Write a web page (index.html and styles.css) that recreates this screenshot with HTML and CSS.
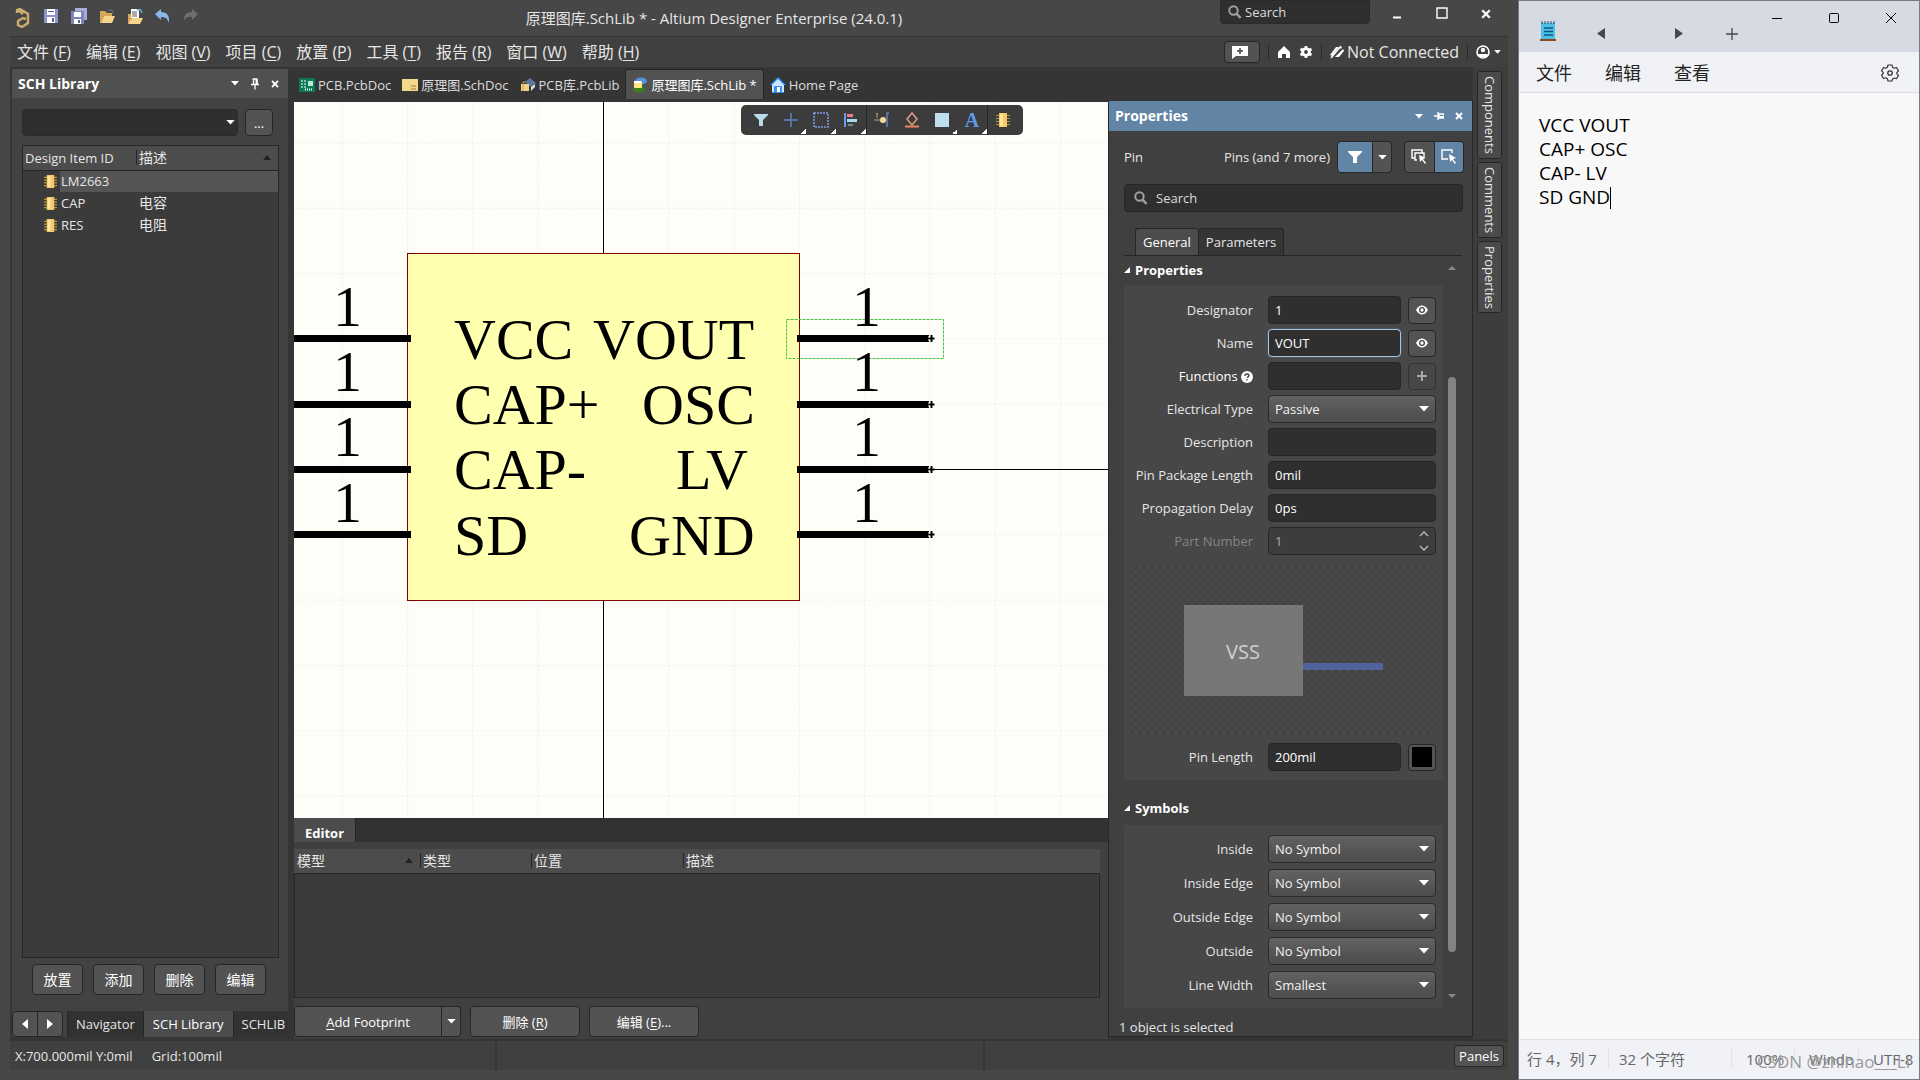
FILE: index.html
```html
<!DOCTYPE html>
<html lang="zh-CN">
<head>
<meta charset="utf-8">
<title>原理图库.SchLib * - Altium Designer Enterprise (24.0.1)</title>
<link rel="stylesheet" href="styles.css">
</head>
<body>
<svg class="defs" width="0" height="0" aria-hidden="true">
  <symbol id="down" viewBox="0 0 10 6"><path d="M0 0h10L5 5.500z" fill="currentColor"/></symbol>
  <symbol id="chip" viewBox="0 0 14 16"><path d="M0 3.500h14M0 6.500h14M0 9.500h14M0 12.500h14" stroke="#b8933f" stroke-width="1.200"/><rect x="3" y="1" width="8" height="14" fill="#f6c968"/><rect x="4" y="2" width="3" height="12" fill="#ffe3a0"/></symbol>
  <symbol id="search" viewBox="0 0 14 14"><circle cx="5.500" cy="5.500" r="4.200" fill="none" stroke="#a0a0a0" stroke-width="2"/><path d="M8.500 8.500l4 4.500" stroke="#a0a0a0" stroke-width="2.600"/></symbol>
  <symbol id="eye" viewBox="0 0 14 12"><path d="M1 6C3 2.500 5 1.500 7 1.500S11 2.500 13 6C11 9.500 9 10.500 7 10.500S3 9.500 1 6z" fill="#fff"/><circle cx="7" cy="6" r="3" fill="#444"/><circle cx="7" cy="6" r="1.700" fill="#fff"/></symbol>
  <symbol id="pin" viewBox="0 0 10 12"><path d="M2.500 1h5M3.500 1v5M7 1v5M1 6.500h8M5 7v4.500" stroke="#fff" stroke-width="1.300" fill="none"/><path d="M5.500 1h2v5h-2z" fill="#fff"/></symbol>
  <symbol id="x" viewBox="0 0 8 8"><path d="M1 1l6 6M7 1L1 7" stroke="currentColor" stroke-width="1.800"/></symbol>
  <symbol id="funnel" viewBox="0 0 14 14"><path d="M0 1h14v1L9 7v6H5V7L0 2z" fill="currentColor"/></symbol>
</svg>
<div class="desktop">
<main class="altium">
  <header class="titlebar">
    <div class="quick">
      <svg width="16" height="20" viewBox="0 0 16 20"><path d="M2 5V2l3-1 8 5v9l-6 4-4-2v-4l5-3 3 1M3 2l5 4" fill="none" stroke="#c9ad6d" stroke-width="2.400"/></svg>
      <svg width="16" height="16" viewBox="0 0 16 16"><path d="M1 1h14v14H1z" fill="#8f93cd"/><path d="M4 1h8v6H4zM4 9h8v6H4z" fill="#fff"/><path d="M9 10h2v4H9zM5 3h6v1H5z" fill="#5c5f90"/></svg>
      <svg width="16" height="16" viewBox="0 0 16 16"><path d="M4 0h12v12H4z" fill="#a9acd9"/><path d="M0 3h13v13H0z" fill="#8084bd"/><path d="M3 4h7v5H3zM3 11h7v5H3z" fill="#fff"/><path d="M7 12h2v3H7z" fill="#5c5f90"/></svg>
      <svg width="16" height="16" viewBox="0 0 16 16"><path d="M1 3h5l2 2h5v3H5l-3 7H1z" fill="#d6a954"/><path d="M5 8h11l-3 7H2z" fill="#f7d48c"/><path d="M9 3q4-3 5 2" stroke="#4c6c88" stroke-width="1.500" fill="none"/></svg>
      <svg width="16" height="16" viewBox="0 0 16 16"><path d="M1 6h3v9H1z" fill="#d6a954"/><path d="M4 1h8v9H4z" fill="#fff"/><path d="M5 4h5M5 6h5M5 8h5" stroke="#555"/><path d="M5 10h11l-3 6H1z" fill="#f7d48c"/><path d="M10 2q4-2 5 3" stroke="#6ba2cf" stroke-width="1.500" fill="none"/></svg>
      <svg width="16" height="16" viewBox="0 0 16 16"><path d="M0 6l6-5v3q9 0 8 11-2-7-8-6v3z" fill="#8ab6ea"/></svg>
      <svg width="16" height="16" viewBox="0 0 16 16"><path d="M15 6l-6-5v3q-9 0-8 9 2-5 8-4v3z" fill="#6f6f6f"/></svg>
    </div>
    <h1>原理图库.SchLib * - Altium Designer Enterprise (24.0.1)</h1>
    <div class="title-right">
      <label class="title-search"><svg width="14" height="14"><use href="#search"/></svg><input type="text" placeholder="Search" aria-label="Search"></label>
      <button aria-label="Minimize"><svg width="12" height="12"><path d="M2 10.500h8" stroke="#fff" stroke-width="2"/></svg></button>
      <button aria-label="Maximize"><svg width="12" height="12"><path d="M1 1h10v10H1z" fill="none" stroke="#fff" stroke-width="1.400"/></svg></button>
      <button aria-label="Close"><svg width="10" height="10" class="w"><use href="#x"/></svg></button>
    </div>
  </header>
  <nav class="menubar">
    <div class="menus">
      <button>文件 (<u>F</u>)</button><button>编辑 (<u>E</u>)</button><button>视图 (<u>V</u>)</button><button>项目 (<u>C</u>)</button><button>放置 (<u>P</u>)</button><button>工具 (<u>T</u>)</button><button>报告 (<u>R</u>)</button><button>窗口 (<u>W</u>)</button><button>帮助 (<u>H</u>)</button>
    </div>
    <div class="account">
      <button class="btn note" aria-label="Comment"><svg width="18" height="14" viewBox="0 0 18 14"><path d="M1 1h16v10H5l-4 3z" fill="#fff"/><path d="M9 3v6M6 6h6" stroke="#444" stroke-width="1.500"/></svg></button>
      <i></i>
      <svg width="14" height="14" viewBox="0 0 14 14"><path d="M7 1l6 6v6H9V9H5v4H1V7z" fill="#fff"/></svg>
      <svg width="14" height="14" viewBox="0 0 14 14"><path d="M7 1v12M1.500 4l11 6M12.500 4l-11 6" stroke="#fff" stroke-width="2.600"/><circle cx="7" cy="7" r="3.600" fill="none" stroke="#fff" stroke-width="2.400"/><circle cx="7" cy="7" r="1.900" fill="#404040"/></svg>
      <i></i>
      <svg width="14" height="14" viewBox="0 0 14 14"><path d="M0 10l6-8h3L2 11zM5 12l8-8 1 2-5 6zM9 2h3l-1 2z" fill="#fff"/><path d="M1 13L11 1" stroke="#fff" stroke-width="1.400"/></svg>
      <span class="conn">Not Connected</span>
      <i></i>
      <svg width="14" height="14" viewBox="0 0 14 14"><circle cx="7" cy="7" r="6" fill="none" stroke="#fff" stroke-width="1.600"/><circle cx="7" cy="5" r="2.200" fill="#fff"/><path d="M2 9h10l-2 3H4z" fill="#fff"/></svg>
      <svg width="7" height="4" class="w"><use href="#down"/></svg>
    </div>
  </nav>

  <div class="workspace">
    <aside class="library">
      <header class="panel-head"><h2>SCH Library</h2><span class="tools"><svg width="8" height="5"><use href="#down"/></svg><svg width="10" height="12"><use href="#pin"/></svg><svg width="8" height="8"><use href="#x"/></svg></span></header>
      <div class="lib-search">
        <div class="pick dark"><select aria-label="Filter"><option></option></select><svg width="9" height="5"><use href="#down"/></svg></div>
        <button class="btn">...</button>
      </div>
      <div class="lib-list">
        <table>
          <thead><tr><th>Design Item ID</th><th class="sep"><span>描述<svg width="8" height="5" viewBox="0 0 8 5"><path d="M0 5h8L4 0z" fill="#222"/></svg></span></th></tr></thead>
          <tbody>
            <tr class="sel"><td><svg width="13" height="15"><use href="#chip"/></svg>LM2663</td><td></td></tr>
            <tr><td><svg width="13" height="15"><use href="#chip"/></svg>CAP</td><td>电容</td></tr>
            <tr><td><svg width="13" height="15"><use href="#chip"/></svg>RES</td><td>电阻</td></tr>
          </tbody>
        </table>
      </div>
      <div class="lib-actions"><button class="btn">放置</button><button class="btn">添加</button><button class="btn">删除</button><button class="btn">编辑</button></div>
      <div class="lib-tabs">
        <div class="stepper"><button class="btn" aria-label="Previous"><svg width="6" height="10"><path d="M6 0v10L0 5z" fill="#fff"/></svg></button><button class="btn" aria-label="Next"><svg width="6" height="10"><path d="M0 0v10l6-5z" fill="#fff"/></svg></button></div>
        <button class="tab">Navigator</button><button class="tab on">SCH Library</button><button class="tab">SCHLIB</button>
      </div>
    </aside>

    <section class="center">
      <div class="doc-tabs">
        <button><svg width="16" height="14" viewBox="0 0 16 14"><path d="M0 0h16v14H0z" fill="#087a55"/><path d="M2 3h2M2 6h2M2 9h2M5 3h2M5 6h2M5 9h2" stroke="#fff"/><path d="M9 3h5v5H9z" fill="#bfe7d8"/><path d="M6 11.500h8" stroke="#fff" stroke-dasharray="1 1" stroke-width="2"/></svg>PCB.PcbDoc</button>
        <button><svg width="16" height="14" viewBox="0 0 16 14"><path d="M0 1h16v12H0z" fill="#f5d98a"/><path d="M9 8h5M9 11h5" stroke="#9c7c34"/></svg>原理图.SchDoc</button>
        <button><svg width="16" height="14" viewBox="0 0 16 14"><path d="M5 4l5-4 6 5-5 4z" fill="#57789c"/><path d="M1 6h8v7H1z" fill="#f0d488"/><path d="M3 13V4h3" stroke="#caa04c" fill="none"/><path d="M11 9l4-3v3l-4 4z" fill="#ddd"/></svg>PCB库.PcbLib</button>
        <button class="on"><svg width="16" height="16" viewBox="0 0 16 16"><ellipse cx="7" cy="12" rx="6" ry="3.500" fill="#3d7d1c"/><ellipse cx="9" cy="4" rx="6" ry="3.500" fill="#5791dc"/><rect x="2" y="4" width="8" height="7" rx="1" fill="#ffe784"/><path d="M2 4h7v2H2z" fill="#fff"/></svg>原理图库.SchLib *</button>
        <button><svg width="16" height="16" viewBox="0 0 16 16"><path d="M8 0l8 8h-2v8H2V8H0z" fill="#2f8df0"/><path d="M8 2l6 6v7H2V8z" fill="#cfe6ff"/><path d="M4 9h8v6H4z" fill="#3d92f2"/><path d="M7 10h3v5H7z" fill="#fff"/></svg>Home Page</button>
      </div>
      <div class="canvas">
        <svg class="sheet" width="100%" height="100%">
          <defs><pattern id="grid" x="309" y="367" width="65.300" height="65.300" patternUnits="userSpaceOnUse"><path d="M.5 0v65.300M0 .5h65.300" stroke="#efeeeb" stroke-dasharray="2 2"/></pattern></defs>
          <rect width="100%" height="100%" fill="url(#grid)"/>
          <path d="M309.500 0v716M638 367.500h800" stroke="#000" shape-rendering="crispEdges"/>
          <rect x="113.500" y="151.500" width="392" height="347" fill="#ffffb0" stroke="#800000"/>
          <g stroke="#000" stroke-width="7"><path d="M0 236.500h117M0 302.500h117M0 367.500h117M0 432.500h117M503 236.500h132M503 302.500h132M503 367.500h132M503 432.500h132"/></g>
          <path d="M632.500 236.500h8M637.500 233v7M632.500 302.500h8M637.500 299v7M632.500 367.500h8M637.500 364v7M632.500 432.500h8M637.500 429v7" stroke="#000" stroke-width="2"/>
          <path d="M634 235h2M634 238h2M634 301h2M634 304h2M634 366h2M634 369h2M634 431h2M634 434h2" stroke="#fff"/>
          <rect x="492.500" y="217.500" width="157" height="39" fill="none" stroke="#46c646" stroke-dasharray="3 1"/>
          <g class="pins">
            <text x="160" y="257">VCC</text><text x="160" y="322">CAP+</text><text x="160" y="387">CAP-</text><text x="160" y="453">SD</text>
            <text x="299" y="257">VOUT</text><text x="348" y="322">OSC</text><text x="382" y="387" class="kern">LV</text><text x="335" y="453">GND</text>
            <text x="39" y="224">1</text><text x="39" y="289">1</text><text x="39" y="354">1</text><text x="39" y="420">1</text>
            <text x="558" y="224">1</text><text x="558" y="289">1</text><text x="558" y="354">1</text><text x="558" y="420">1</text>
          </g>
        </svg>
        <div class="floatbar">
          <button aria-label="Filter"><svg width="14" height="14" color="#b9dcea"><use href="#funnel"/></svg></button>
          <button class="more" aria-label="Move"><svg width="14" height="14"><path d="M7 0v14M0 7h14" stroke="#5f82c4" stroke-width="1.500"/></svg></button>
          <button class="more" aria-label="Select"><svg width="16" height="16"><path d="M1 1h14v14H1z" fill="none" stroke="#7f9be8" stroke-width="1.500" stroke-dasharray="2 1"/></svg></button>
          <button class="more" aria-label="Align"><svg width="14" height="14"><path d="M1 0v14" stroke="#5f9be8" stroke-width="2"/><path d="M3 1h6v3H3z" fill="#ef7b86"/><path d="M3 6h10v3H3z" fill="#a9d8ea"/><path d="M4 12h5" stroke="#a9d8ea"/></svg></button>
          <button class="bar" aria-label="Place pin"><svg width="16" height="16"><path d="M0 8h9M3 1v5M2 2h2" stroke="#b7a56c"/><circle cx="9" cy="8" r="3" fill="#f3dc9b"/><path d="M15 1h-2v14" stroke="#5f82c4" fill="none" stroke-width="1.500"/></svg></button>
          <button aria-label="Port"><svg width="14" height="16"><path d="M7 1l5 6-5 6-5-6z" fill="none" stroke="#e09a86" stroke-width="1.500"/><path d="M0 14.500h14" stroke="#ee8465" stroke-width="2"/></svg></button>
          <button class="more" aria-label="Rectangle"><svg width="14" height="14"><path d="M0 0h14v14H0z" fill="#bde0ec"/></svg></button>
          <button class="more letter">A</button>
          <button class="bar" aria-label="Component"><svg width="14" height="16"><use href="#chip"/></svg></button>
        </div>
      </div>
      <div class="editor">
        <div class="editor-tabs"><button>Editor</button></div>
        <div class="models"><table><thead><tr><th><span>模型<svg width="8" height="5" viewBox="0 0 8 5"><path d="M0 5h8L4 0z" fill="#222"/></svg></span></th><th class="sep">类型</th><th class="sep">位置</th><th class="sep">描述</th></tr></thead></table></div>
        <div class="model-actions">
          <div class="split"><button class="btn"><u>A</u>dd Footprint</button><button class="btn" aria-label="More"><svg width="9" height="5"><use href="#down"/></svg></button></div>
          <button class="btn">删除 (<u>R</u>)</button><button class="btn">编辑 (<u>E</u>)...</button>
        </div>
      </div>
    </section>

    <aside class="props">
      <header class="panel-head blue"><h2>Properties</h2><span class="tools"><svg width="8" height="5"><use href="#down"/></svg><svg width="10" height="8" viewBox="0 0 10 8"><path d="M0 4h4M4 0v8M5 2h5v4H5z" stroke="#fff" stroke-width="1.300" fill="none"/><path d="M5 4h5v2H5z" fill="#fff"/></svg><svg width="8" height="8"><use href="#x"/></svg></span></header>
      <div class="scope">
        <span>Pin</span><span class="what">Pins (and 7 more)</span>
        <div class="split"><button class="btn lit" aria-label="Filter"><svg width="14" height="14"><use href="#funnel"/></svg></button><button class="btn" aria-label="Filter options"><svg width="9" height="5"><use href="#down"/></svg></button></div>
        <div class="split even"><button class="btn" aria-label="All objects"><svg width="16" height="16"><path d="M4 9H1V1h10v3M6 11H4V4h9v4" fill="none" stroke="#fff" stroke-width="1.400"/><path d="M8 6l7 3-3 1 3 4-1 1-3-4-2 2z" fill="#fff"/></svg></button><button class="btn lit" aria-label="Selected"><svg width="16" height="16"><path d="M7 10H1V1h10v3" fill="none" stroke="#fff" stroke-width="1.400"/><path d="M8 5l7 4-3 1 3 4-1 1-3-4-2 2z" fill="#fff"/></svg></button></div>
      </div>
      <label class="find"><svg width="14" height="14"><use href="#search"/></svg><input type="text" placeholder="Search" aria-label="Search properties"></label>
      <div class="ptabs"><button class="on">General</button><button>Parameters</button></div>
      <div class="scroll">
        <div class="content">
          <h3><svg width="6" height="6"><path d="M6 0v6H0z" fill="#fff"/></svg>Properties</h3>
          <div class="box">
            <div class="row"><label for="f1">Designator</label><input id="f1" value="1"><button class="btn sq" aria-label="Show designator"><svg width="14" height="12"><use href="#eye"/></svg></button></div>
            <div class="row"><label for="f2">Name</label><input id="f2" class="focus" value="VOUT"><button class="btn sq" aria-label="Show name"><svg width="14" height="12"><use href="#eye"/></svg></button></div>
            <div class="row"><label for="f3" class="bright">Functions <svg width="12" height="12"><circle cx="6" cy="6" r="6" fill="#fff"/><path d="M4 5q0-2 2-2t2 1.500q0 1-2 2.200M6 8.200v1.400" stroke="#444" stroke-width="1.400" fill="none"/></svg></label><input id="f3"><button class="btn sq off" aria-label="Add function"><svg width="10" height="10"><path d="M5 0v10M0 5h10" stroke="#aaa" stroke-width="2"/></svg></button></div>
            <div class="row wide"><label for="f4">Electrical Type</label><div class="pick"><select id="f4"><option>Passive</option></select><svg width="10" height="6"><use href="#down"/></svg></div></div>
            <div class="row wide"><label for="f5">Description</label><input id="f5"></div>
            <div class="row wide"><label for="f6">Pin Package Length</label><input id="f6" value="0mil"></div>
            <div class="row wide"><label for="f7">Propagation Delay</label><input id="f7" value="0ps"></div>
            <div class="row wide dim"><label for="f8">Part Number</label><div class="pick"><input id="f8" type="number" value="1" disabled><svg width="10" height="20"><path d="M1 5l4-4 4 4M1 15l4 4 4-4" fill="none" stroke="#bbb" stroke-width="1.400"/></svg></div></div>
            <div class="preview"><div class="part">VSS</div><div class="lead"></div></div>
            <div class="row"><label for="f9">Pin Length</label><input id="f9" value="200mil"><button class="btn sq" aria-label="Pin color"><span class="swatch"></span></button></div>
          </div>
          <h3><svg width="6" height="6"><path d="M6 0v6H0z" fill="#fff"/></svg>Symbols</h3>
          <div class="box sym">
            <div class="row wide"><label for="s1">Inside</label><div class="pick"><select id="s1"><option>No Symbol</option></select><svg width="10" height="6"><use href="#down"/></svg></div></div>
            <div class="row wide"><label for="s2">Inside Edge</label><div class="pick"><select id="s2"><option>No Symbol</option></select><svg width="10" height="6"><use href="#down"/></svg></div></div>
            <div class="row wide"><label for="s3">Outside Edge</label><div class="pick"><select id="s3"><option>No Symbol</option></select><svg width="10" height="6"><use href="#down"/></svg></div></div>
            <div class="row wide"><label for="s4">Outside</label><div class="pick"><select id="s4"><option>No Symbol</option></select><svg width="10" height="6"><use href="#down"/></svg></div></div>
            <div class="row wide"><label for="s5">Line Width</label><div class="pick"><select id="s5"><option>Smallest</option></select><svg width="10" height="6"><use href="#down"/></svg></div></div>
          </div>
        </div>
        <div class="rail"><svg width="8" height="4"><path d="M0 4h8L4 0z" fill="#888"/></svg><div class="thumb"></div><svg width="8" height="4"><path d="M0 0h8L4 4z" fill="#888"/></svg></div>
      </div>
      <footer>1 object is selected</footer>
    </aside>

    <nav class="side"><button>Components</button><button>Comments</button><button>Properties</button></nav>
  </div>

  <footer class="status"><span>X:700.000mil Y:0mil</span><span class="gridsize">Grid:100mil</span><span class="cell"></span><button class="btn">Panels</button></footer>
</main>

<section class="notepad">
  <header>
    <svg width="16" height="20" viewBox="0 0 16 20"><path d="M1 2h14v16H1z" fill="#4cc0e4"/><path d="M0 18h16v2H0z" fill="#8a4a20"/><path d="M2 0v3M5 0v3M8 0v3M11 0v3M14 0v3" stroke="#246"/><path d="M4 7h9M4 10.500h9M4 14h9" stroke="#0c5680" stroke-width="1.500"/></svg>
    <button aria-label="Previous tab"><svg width="9" height="11"><path d="M8 0v11L0 5.500z" fill="#444750"/></svg></button>
    <button aria-label="Next tab"><svg width="9" height="11"><path d="M0 0v11l8-5.500z" fill="#444750"/></svg></button>
    <button aria-label="New tab"><svg width="12" height="12"><path d="M6 0v12M0 6h12" stroke="#444750" stroke-width="1.300"/></svg></button>
    <div class="winctl">
      <button aria-label="Minimize"><svg width="10" height="10"><path d="M0 5.500h10" stroke="#000"/></svg></button>
      <button aria-label="Maximize"><svg width="10" height="10"><rect x=".5" y=".5" width="9" height="9" rx="1" fill="none" stroke="#000"/></svg></button>
      <button aria-label="Close"><svg width="10" height="10"><path d="M0 0l10 10M10 0L0 10" stroke="#000"/></svg></button>
    </div>
  </header>
  <nav><button>文件</button><button>编辑</button><button>查看</button><button class="gear" aria-label="Settings"><svg width="18" height="18" viewBox="0 0 18 18"><path d="M7 1h4l.6 2.300 1.600.9 2.300-.7 2 3.400-1.700 1.700v1l1.700 1.700-2 3.400-2.300-.7-1.600.9L11 17H7l-.6-2.300-1.600-.9-2.300.7-2-3.400 1.700-1.700v-1L.5 6.900l2-3.400 2.300.7 1.600-.9z" fill="none" stroke="#333" stroke-width="1.200" stroke-linejoin="round"/><circle cx="9" cy="9" r="2.200" fill="none" stroke="#333" stroke-width="1.300"/></svg></button></nav>
  <article contenteditable="true" spellcheck="false">VCC VOUT<br>CAP+ OSC<br>CAP- LV<br>SD GND<span class="caret"></span></article>
  <footer><span>行 4，列 7</span><span>32 个字符</span><span>100%</span><span>Windo</span><span>UTF-8</span><em>CSDN @zhihao___Li</em></footer>
</section>
</div>
</body>
</html>
```
FILE: styles.css
```css
* { box-sizing: border-box; }
body { margin: 0; font: 13px/18px "Open Sans", "Noto Sans CJK SC", sans-serif; color: #e6e6e6; background: #474747; }
button, input, select { font: inherit; color: inherit; margin: 0; padding: 0; border: 0; background: none; min-width: 0; }
button { white-space: nowrap; }
h1, h2, h3 { margin: 0; font-size: 14px; }
svg { flex: none; }
table { width: 100%; border-collapse: collapse; table-layout: fixed; }
th, td { padding: 0; text-align: left; font-weight: 400; }
.defs { position: absolute; }
.w { color: #fff; }
.desktop { display: grid; grid-template-columns: minmax(0, 1fr) 402px; height: 100vh; min-height: 1080px; }
.altium { display: flex; flex-direction: column; min-width: 0; padding: 0 9px 10px 10px; background: #474747; border-right: 1px solid #38434c; }

.btn { display: flex; align-items: center; justify-content: center; background: #535353; border: 1px solid #262626; border-radius: 4px; color: #fff; }
.btn u { text-underline-offset: 2px; }
.split { display: flex; }
.split .btn:first-child { flex: 1; border-radius: 4px 0 0 4px; }
.split .btn:last-child { width: 19px; border-left: 0; border-radius: 0 4px 4px 0; }
.btn.lit { background: #6285a5; }

.titlebar { display: grid; grid-template-columns: 1fr auto 1fr; align-items: center; height: 36px; flex: none; }
.quick { display: flex; gap: 12px; padding-left: 5px; }
.titlebar h1 { font-size: 15px; font-weight: 400; white-space: nowrap; padding-right: 90px; }
.title-right { display: flex; align-items: center; justify-content: flex-end; gap: 33px; align-self: start; height: 28px; padding-right: 17px; }
.title-right .title-search { margin-right: -12px; }
.title-search { display: flex; align-items: center; gap: 3px; width: 150px; height: 24px; padding-left: 7px; align-self: start; background: #2f2f2f; border: 1px solid #2a2a2a; border-radius: 0 0 4px 4px; }
input::placeholder { color: #ddd; opacity: 1; }
.title-search input { width: 110px; }

.menubar { display: flex; justify-content: space-between; align-items: center; height: 31px; flex: none; background: #404040; border-top: 1px solid #353535; }
.menus { display: flex; gap: 15px; padding-left: 7px; font-size: 16px; }
.menus u { text-underline-offset: 2px; }
.account { display: flex; align-items: center; gap: 8px; padding-right: 7px; }
.account i { width: 1px; height: 16px; background: #2a2a2a; }
.account .note { width: 36px; height: 22px; }
.account .conn { font-size: 16px; margin-left: -5px; }
.account svg:last-child { margin-left: -4px; }

.workspace { flex: 1; min-height: 0; display: grid; grid-template-columns: 280px minmax(0, 1fr) 365px 35px; background: #353535; border-left: 1px solid #353535; }
.panel-head { display: flex; align-items: center; justify-content: space-between; height: 29px; flex: none; padding: 0 9px 0 6px; background: #505050; color: #fff; }
.panel-head h2 { font-size: 14px; }
.tools { display: flex; align-items: center; gap: 11px; }
.panel-head.blue { height: 30px; background: #6285a5; }

.library { display: flex; flex-direction: column; min-width: 0; margin: 2px 3px 2px 1px; background: #424242; }
.lib-search { display: flex; gap: 7px; padding: 11px 15px 9px 10px; }
.lib-search .btn { width: 28px; height: 27px; }
.pick { display: grid; align-items: center; flex: 1; min-width: 0; }
.pick > * { grid-area: 1 / 1; }
.pick > svg { justify-self: end; margin-right: 7px; color: #fff; pointer-events: none; }
.pick select { appearance: none; width: 100%; height: 28px; padding-left: 6px; border: 1px solid #2a2a2a; border-radius: 4px; background: linear-gradient(#626262, #4c4c4c); color: #f2f2f2; }
.pick.dark select { height: 27px; background: #2f2f2f; }
.pick.dark > svg { margin-right: 3px; }
.lib-list { flex: 1; margin: 0 9px 0 10px; border: 1px solid #262626; background: #3b3b3b; }
thead tr { height: 24px; background: #4c4c4c; }
th { border-bottom: 1px solid #262626; line-height: 20px; }
.lib-list th:first-child { width: 113px; padding-left: 2px; white-space: nowrap; }
.sep { background: linear-gradient(#262626, #262626) 0 4px / 1px 15px no-repeat; padding-left: 3px; }
th span { display: flex; justify-content: space-between; align-items: center; padding-right: 7px; }
.sep, .models th, .lib-list td + td { font-size: 14px; }
.lib-list tbody tr { height: 22px; }
.lib-list td { line-height: 20px; }
.lib-list td:first-child { padding-left: 21px; }
.lib-list td + td { padding-left: 3px; }
.lib-list td svg { vertical-align: -3px; margin-right: 4px; }
.sel { background: linear-gradient(#555, #555) 37px 0 no-repeat; }
.lib-actions { display: flex; gap: 10px; padding: 6px 20px 0; font-size: 14px; }
.lib-actions .btn { width: 51px; height: 31px; }
.lib-tabs { display: flex; margin-top: 16px; height: 26px; overflow: hidden; }
.stepper { display: flex; margin-right: 4px; }
.stepper .btn { width: 26px; border-radius: 4px 0 0 4px; }
.stepper .btn + .btn { width: 25px; border-left: 0; border-radius: 0 4px 4px 0; }
.tab { padding: 0 8px; flex: none; background: #323232; border-left: 1px solid #262626; }
.tab.on { background: #4c4c4c; color: #fff; padding: 0 9px; }

.center { display: flex; flex-direction: column; min-width: 0; padding-left: 3px; }
.doc-tabs { display: flex; gap: 1px; height: 35px; padding: 2px 0 3px; flex: none; }
.doc-tabs button { display: flex; align-items: center; gap: 3px; padding: 0 4px; color: #dcdcdc; border: 1px solid transparent; border-bottom: 0; }
.doc-tabs .on { background: #525252; border-color: #252525; border-radius: 3px 3px 0 0; color: #fff; padding: 0 6px; }
.canvas { position: relative; flex: 1; min-height: 0; background: #fffdf8; overflow: hidden; }
.sheet { display: block; }
.pins { font: 58px "Liberation Serif", serif; font-kerning: none; }
.kern { font-kerning: normal; }
.floatbar { position: absolute; top: 3px; right: 85px; display: flex; width: 282px; height: 30px; padding: 0 5px; background: #3c3c3c; border-radius: 5px; }
.floatbar button { flex: 1; display: flex; align-items: center; justify-content: center; }
.floatbar .more { background: linear-gradient(135deg, transparent 50%, #fff 50%) right bottom 1px / 5px 5px no-repeat; }
.floatbar .bar { border-left: 1px solid #262626; }
.floatbar .letter { font: bold 20px "Liberation Serif", serif; color: #5d9be8; }

.editor { display: flex; flex-direction: column; gap: 7px; height: 221px; flex: none; background: linear-gradient(#323232, #323232) 0 0 / 100% 24px no-repeat #404040; }
.editor-tabs { height: 24px; }
.editor-tabs button { height: 24px; padding: 5px 11px 0; background: #4c4c4c; color: #fff; font-weight: 700; border-right: 1px solid #262626; }
.models { height: 149px; border-right: 8px solid #404040; background: #3b3b3b; box-shadow: inset 0 0 0 1px #262626; }
.models th:nth-child(1) { width: 126px; padding-left: 3px; }
.models th:nth-child(2) { width: 111px; }
.models th:nth-child(3) { width: 152px; }
.model-actions { display: flex; gap: 9px; padding-top: 1px; }
.model-actions .btn { height: 31px; white-space: pre; }
.model-actions > .btn { width: 110px; }
.model-actions .split { width: 167px; }

.props { display: flex; flex-direction: column; min-width: 0; margin: 34px 0 2px; border: solid #262626; border-width: 0 1px 1px; background: #404040; }
.scope { display: flex; align-items: center; padding: 10px 8px 0 15px; }
.scope .what { margin-left: auto; margin-right: 7px; }
.scope .btn { height: 32px; }
.scope .split { width: 55px; }
.scope .even { width: 60px; margin-left: 12px; }
.scope .even .btn { flex: 1; }
.find { display: flex; align-items: center; gap: 8px; height: 28px; margin: 11px 9px 0 15px; padding-left: 9px; background: #2f2f2f; border: 1px solid #262626; border-radius: 4px; }
.ptabs { display: flex; height: 28px; margin: 16px 10px 0 15px; padding-left: 11px; border-bottom: 1px solid #262626; flex: none; }
.ptabs button { padding: 0 7px; background: #353535; border: 1px solid #262626; border-bottom: 0; border-radius: 3px 3px 0 0; }
.ptabs .on { background: #4c4c4c; color: #fff; border-right: 0; }
.scroll { flex: 1; display: flex; gap: 5px; padding: 3px 16px 0 15px; min-height: 0; }
.content { flex: 1; min-width: 0; }
.content h3 { display: flex; align-items: center; gap: 5px; height: 22px; color: #fff; font-size: 13px; }
.box { display: flex; flex-direction: column; gap: 5px; margin: 5px 0 17px; padding: 10px 7px 9px 6px; background: #474747; }
.content h3 + .sym { margin: 6px 0 0; gap: 6px; }
.row { display: grid; grid-template-columns: 123px minmax(0, 1fr) 28px; column-gap: 7px; align-items: center; height: 28px; }
.row.wide { grid-template-columns: 123px minmax(0, 1fr); }
.row label { text-align: right; white-space: nowrap; }
.row label + * { margin-left: 8px; }
.row label svg { vertical-align: -2px; }
.bright { color: #fff; }
.row > input, .dim input { height: 28px; padding-left: 6px; background: #2f2f2f; border: 1px solid #262626; border-radius: 4px; color: #fff; width: auto; }
.row .focus { border-color: #a9c4dd; box-shadow: 0 0 2px #4f7396; outline: none; }
.dim { color: #868686; }
.dim input { width: 100%; background: #3d3d3d; color: #aaa; appearance: textfield; }
.sq { height: 27px; }
.sq.off { background: #474747; border-color: #333; }
.swatch { width: 20px; height: 20px; background: #000; }
.preview { display: flex; justify-content: center; align-items: center; height: 168px; margin: 6px 0 4px; background: repeating-conic-gradient(#434343 0 25%, #494949 0 50%) 0 0 / 8px 8px; }
.part { display: flex; align-items: center; justify-content: center; width: 119px; height: 91px; padding-top: 4px; background: #777; color: #d0d0d0; font-size: 20px; }
.lead { width: 80px; height: 7px; margin-top: 32px; background: #52629c; }
.rail { display: flex; flex-direction: column; align-items: center; width: 8px; padding: 7px 0 10px; }
.thumb { width: 8px; flex: 1; margin: 107px 0 42px; border-radius: 4px; background: #838383; }
.props > footer { height: 28px; flex: none; padding: 10px 0 0 10px; }
.side { display: flex; flex-direction: column; gap: 3px; padding: 4px 5px 0 4px; background: #3d3d3d; }
.side button { writing-mode: vertical-rl; height: 88px; background: #4a4a4a; border: 1px solid #262626; border-radius: 3px; line-height: 22px; width: 25px; }
.side button:nth-child(2) { height: 76px; }
.side button:nth-child(3) { height: 72px; }

.status { display: flex; align-items: center; height: 31px; flex: none; padding: 0 4px 0 5px; background: #404040; border-top: 2px solid #353535; }
.gridsize { margin-left: 19px; width: 343px; }
.cell { flex: 1; align-self: stretch; border-left: 2px solid #363636; background: linear-gradient(#363636, #363636) 486px 0 / 2px 100% no-repeat; }
.status .btn { width: 50px; height: 22px; }

.notepad { display: flex; flex-direction: column; min-width: 0; background: #f8f8f8; color: #222; border: 1px solid #777c85; }
.notepad header { display: flex; align-items: flex-start; height: 51px; padding: 20px 0 0 21px; background: #d6dae3; flex: none; }
.notepad header > button { margin: 7px 0 0 41px; line-height: 0; }
.notepad header > button:nth-of-type(2) { margin-left: 69px; }
.notepad header > button:nth-of-type(3) { margin-left: 42px; }
.winctl { display: flex; gap: 47px; margin: -8px 23px 0 auto; }
.winctl button { line-height: 0; }
.notepad nav { display: flex; align-items: center; gap: 33px; height: 41px; padding: 2px 20px 0 17px; background: #f1f2f5; border-bottom: 1px solid #dcdde2; font-size: 18px; flex: none; }
.gear { margin-left: auto; line-height: 0; }
article { flex: 1; padding: 20px; color: #000; font: 19px/24px "Open Sans", "Noto Sans CJK SC", sans-serif; outline: none; }
.caret { display: inline-block; width: 1px; height: 22px; background: #000; vertical-align: -5px; }
.notepad footer { position: relative; display: flex; align-items: center; height: 40px; padding: 0 0 2px 8px; font-size: 15px; color: #666; background: #f1f2f8; border-top: 1px solid #dfe0e5; white-space: nowrap; overflow: hidden; }
.notepad footer span { padding-left: 14px; line-height: 20px; border-left: 1px solid #e2e3e9; }
.notepad footer span:nth-child(1) { width: 81px; padding-left: 0; border-left: 0; }
.notepad footer span:nth-child(2) { width: 123px; padding-left: 10px; }
.notepad footer span:nth-child(3) { width: 63px; }
.notepad footer span:nth-child(4) { width: 64px; }
.notepad footer em { position: absolute; right: 9px; bottom: 8px; font-style: normal; font-size: 17px; color: #9a9a9a; }
```
